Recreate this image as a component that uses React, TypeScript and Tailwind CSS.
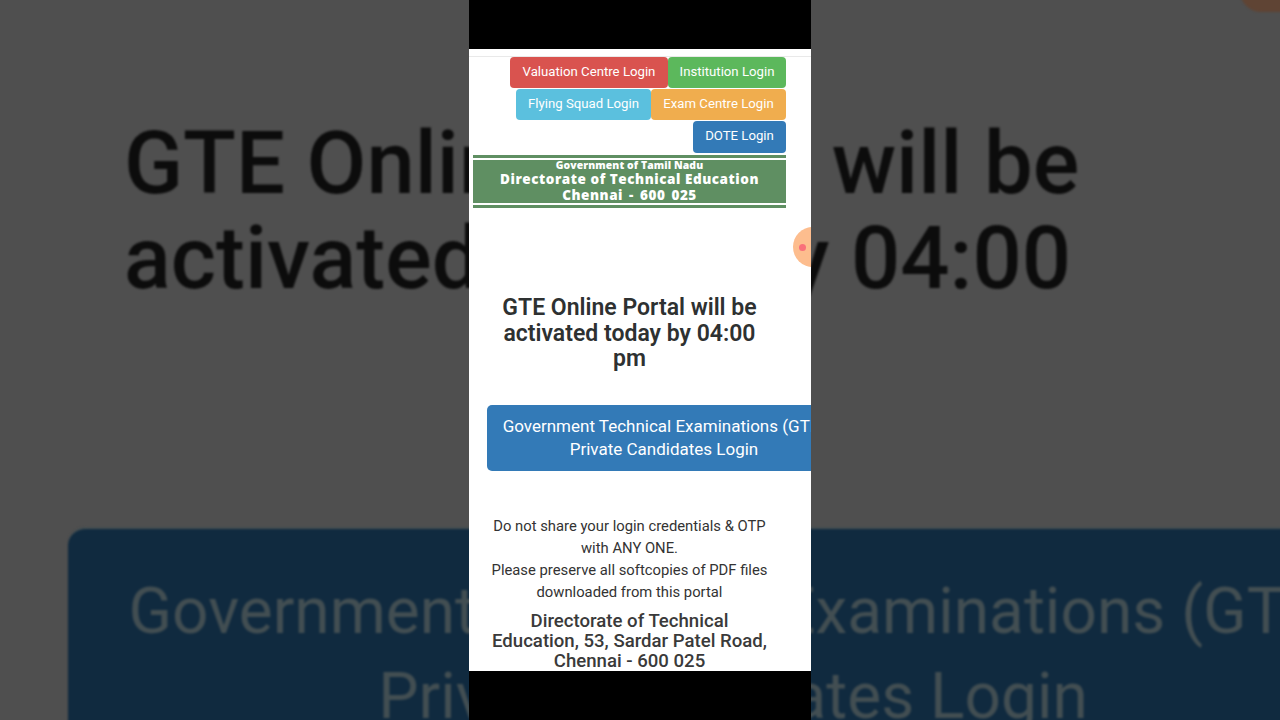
export default function App() {
  return (
    <div className="relative w-[1280px] h-[720px] overflow-hidden bg-[#4f4f4f] font-['Roboto',sans-serif]">
      {/* blurred, enlarged backdrop */}
      <div className="absolute inset-0 blur-[1px] text-[#0c0c0c]">
        <div className="absolute -top-[30px] -right-[30px] w-[70px] h-[42px] rounded-full bg-[#5f4434]" />
        <div className="pt-[116px] pl-[124px] w-[1280px] text-[86.8px] leading-[95px] font-medium whitespace-nowrap">
          <p>GTE Online Portal will be</p>
          <p>activated today by 04:00</p>
        </div>
        <div className="mt-[221px] ml-[68px] w-[1330px] h-[260px] rounded-t-[18px] bg-[#102a3f] border-t-2 border-[#454f52] pt-[40px] text-[#424e52] text-[64px] leading-[85px] text-center whitespace-nowrap">
          <p className="ml-[6px]">Government Technical Examinations (GTE)</p>
          <p>Private Candidates Login</p>
        </div>
      </div>

      {/* phone recording */}
      <div className="relative mx-auto w-[342px] h-[720px] bg-black flex flex-col overflow-hidden">
        <div className="h-[49px] shrink-0 bg-black" />
        <div className="relative h-[622px] shrink-0 bg-white overflow-hidden">
          <div className="h-[8px] border-b border-[#e9e9e9]" />
          <div className="w-[317px] flex flex-col items-end text-[13.2px] leading-[29px] text-white">
            <div className="flex">
              <div className="w-[158px] h-[31px] text-center rounded-[4px] bg-[#d9534f]">Valuation Centre Login</div>
              <div className="w-[118px] h-[31px] text-center rounded-[4px] bg-[#5cb85c]">Institution Login</div>
            </div>
            <div className="flex mt-px">
              <div className="w-[135px] h-[31px] text-center rounded-[4px] bg-[#5bc0de]">Flying Squad Login</div>
              <div className="w-[135px] h-[31px] text-center rounded-[4px] bg-[#f0ad4e]">Exam Centre Login</div>
            </div>
            <div className="w-[93px] h-[32px] mt-px text-center rounded-[4px] bg-[#337ab7]">DOTE Login</div>
          </div>
          <div className="ml-[4px] mt-[2px] w-[313px] h-[53px] flex flex-col">
            <div className="h-[3px] bg-[#5f8f62]" />
            <div className="h-[43px] mt-[2px] bg-[#5f8f62] text-white text-center font-['Open_Sans',sans-serif] font-extrabold">
              <p className="text-[10.4px] leading-[11px] tracking-[0.1px]">Government of Tamil Nadu</p>
              <p className="text-[13.5px] leading-[16px] tracking-[0.55px]">Directorate of Technical Education</p>
              <p className="text-[13.5px] leading-[16px] tracking-[0.55px] [word-spacing:2px]">Chennai - 600 025</p>
            </div>
            <div className="h-[3px] mt-[2px] bg-[#5f8f62]" />
          </div>
          <h1 className="w-[321px] mt-[87px] text-center text-[23px] leading-[25.5px] font-semibold text-[#2e3131]">
            GTE Online Portal will be<br />activated today by 04:00<br />pm
          </h1>
          <div className="ml-[18px] mt-[33px] w-[354px] h-[66px] rounded-[5px] bg-[#337ab7] pt-[10px] text-white text-center text-[17px] leading-[23px] whitespace-nowrap">
            <p>Government Technical Examinations (GTE)</p>
            <p>Private Candidates Login</p>
          </div>
          <div className="w-[321px] mt-[44px] text-center text-[14.8px] leading-[22px] text-[#333333]">
            <p>Do not share your login credentials &amp; OTP<br />with ANY ONE.</p>
            <p>Please preserve all softcopies of PDF files<br />downloaded from this portal</p>
          </div>
          <div className="w-[321px] mt-[8px] text-center text-[18.6px] leading-[20px] font-medium text-[#3a3a3a]">
            Directorate of Technical<br />Education, 53, Sardar Patel Road,<br />Chennai - 600 025
          </div>
          <div className="absolute left-[324px] top-[178px] w-[40px] h-[40px] rounded-full bg-[#fdbd8e] flex items-center pl-[6px]">
            <div className="w-[7px] h-[7px] rounded-full bg-[#f9707a]" />
          </div>
        </div>
      </div>
    </div>
  );
}
